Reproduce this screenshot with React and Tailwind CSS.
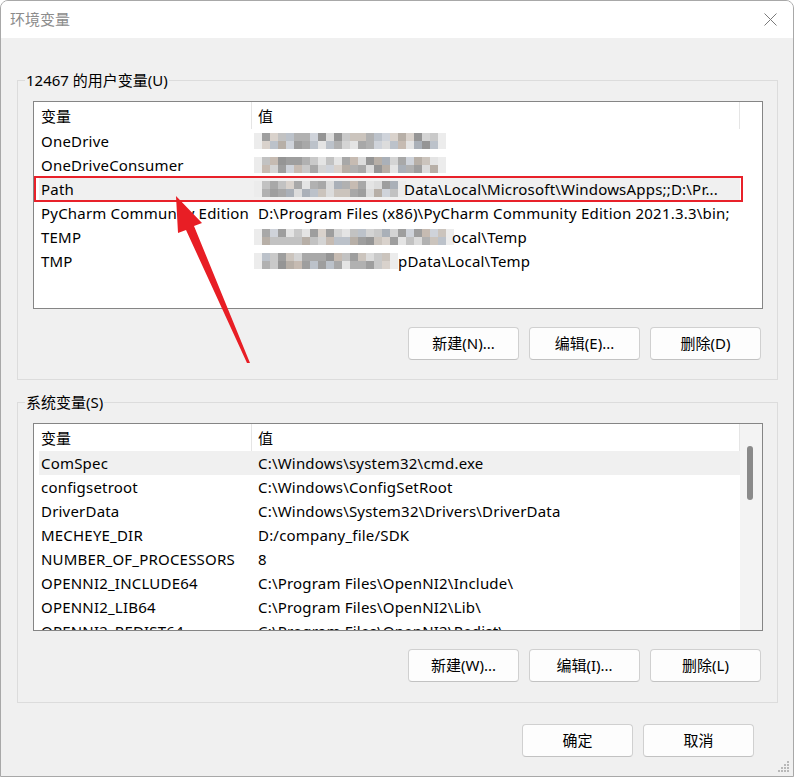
import React from 'react';

const palette = ['#d4d4d4', '#c2c2c2', '#b1b1b1', '#dcdcdc', '#a8a8a8', '#cbc4bd', '#bcc2ca', '#9e9e9e', '#e4e4e4', '#c6bbb2', '#cfd3da', '#959595', '#b7afa7', '#c9c9c9', '#aab0b8', '#d9d2cc'];

// cheap deterministic hash so the blur looks random
const pick = (i, r, seed) => {
    let h = (i + 1) * 374761393 + (r + 1) * 668265263 + seed * 2246822519;
    h = (h ^ (h >>> 13)) * 1274126177;
    h = h ^ (h >>> 16);
    return palette[Math.abs(h) % palette.length];
};

// pixelated blur block that hides part of a value
const Mosaic = ({ width, seed = 1 }) => {
    const cols = Math.ceil(width / 8);
    return (
        <div className="flex flex-col shrink-0" style={{ width }}>
            {[0, 1].map((r) => (
                <div key={r} className="flex">
                    {Array.from({ length: cols }).map((_, i) => (
                        <span
                            key={i}
                            className="w-2 h-2 shrink-0"
                            style={{ backgroundColor: i === 0 || i === cols - 1 ? '#ececec' : pick(i, r, seed) }}
                        />
                    ))}
                </div>
            ))}
        </div>
    );
};

const userVars = [
    { name: 'OneDrive', blur: 188, seed: 1 },
    { name: 'OneDriveConsumer', blur: 190, seed: 2 },
    { name: 'Path', blur: 150, seed: 3, value: 'Data\\Local\\Microsoft\\WindowsApps;;D:\\Pr...', marked: true },
    { name: 'PyCharm Community Edition', value: 'D:\\Program Files (x86)\\PyCharm Community Edition 2021.3.3\\bin;' },
    { name: 'TEMP', blur: 198, seed: 4, value: 'ocal\\Temp' },
    { name: 'TMP', blur: 144, seed: 5, value: 'pData\\Local\\Temp' },
];

const systemVars = [
    { name: 'ComSpec', value: 'C:\\Windows\\system32\\cmd.exe', selected: true },
    { name: 'configsetroot', value: 'C:\\Windows\\ConfigSetRoot' },
    { name: 'DriverData', value: 'C:\\Windows\\System32\\Drivers\\DriverData' },
    { name: 'MECHEYE_DIR', value: 'D:/company_file/SDK' },
    { name: 'NUMBER_OF_PROCESSORS', value: '8' },
    { name: 'OPENNI2_INCLUDE64', value: 'C:\\Program Files\\OpenNI2\\Include\\' },
    { name: 'OPENNI2_LIB64', value: 'C:\\Program Files\\OpenNI2\\Lib\\' },
    { name: 'OPENNI2_REDIST64', value: 'C:\\Program Files\\OpenNI2\\Redist\\' },
];

const Button = ({ children }) => (
    <button className="w-[111px] h-[33px] bg-[#fdfdfd] border border-[#d0d0d0] border-b-[#c2c2c2] rounded-[4px] text-[15px] text-black">
        {children}
    </button>
);

const VarList = ({ rows, scroll }) => (
    <div className="flex h-[208px] bg-white border border-[#858585] overflow-hidden">
        <div className="w-[706px] flex flex-col">
            <div className="flex h-[27px] shrink-0">
                <div className="w-[218px] pl-[7px] pt-[3px] border-r border-[#e5e5e5]">变量</div>
                <div className="flex-1 pl-[6px] pt-[3px] border-r border-[#e5e5e5]">值</div>
            </div>
            {rows.map((row) => (
                <div
                    key={row.name}
                    className={`relative flex items-center h-[24px] shrink-0 ml-[5px] tracking-[0.2px] ${row.selected || row.marked ? 'bg-[#f0f0f0]' : ''}`}
                >
                    <div className="w-[213px] pl-[2px] whitespace-nowrap overflow-hidden">{row.name}</div>
                    <div className="flex-1 flex items-center pl-[6px] whitespace-nowrap overflow-hidden">
                        {row.blur && (
                            <div className="-ml-[4px]">
                                <Mosaic width={row.blur} seed={row.seed} />
                            </div>
                        )}
                        {row.value && <span>{row.value}</span>}
                    </div>
                    {row.marked && (
                        <div className="absolute left-[-5px] right-[-3px] top-[-1px] bottom-[-1px] border-2 border-[#e8212a]" />
                    )}
                </div>
            ))}
        </div>
        <div className={`flex-1 ${scroll ? 'bg-[#f3f3f3]' : ''}`}>
            {scroll && <div className="ml-[7px] mt-[22px] w-[6px] h-[54px] rounded-full bg-[#8a8a8a]" />}
        </div>
    </div>
);

const Group = ({ label, rows, scroll, buttons, className }) => (
    <div className={`relative border border-[#dcdcdc] pt-[20px] pl-[15px] pr-[14px] ${className}`}>
        <span className="absolute left-[7px] top-[-11px] px-[1px] leading-[20px] bg-[#f0f0f0]">{label}</span>
        <VarList rows={rows} scroll={scroll} />
        <div className="flex justify-end gap-[10px] pr-[2px] mt-[18px]">
            {buttons.map((b) => (
                <Button key={b}>{b}</Button>
            ))}
        </div>
    </div>
);

const App = () => {
    return (
        <div className="relative w-[794px] h-[777px] flex flex-col bg-[#f0f0f0] border border-[#a8a8a8] rounded-t-[8px] overflow-hidden text-[15px] text-black font-['Noto_Sans','Noto_Sans_CJK_SC',sans-serif]">
            {/* title bar */}
            <div className="h-[37px] shrink-0 bg-white flex items-center justify-between pl-[9px] pr-[15px]">
                <span className="text-[#8c8c8c]">环境变量</span>
                <svg width="13" height="13" viewBox="0 0 13 13" className="mr-[1px]">
                    <path d="M0.5 0.5 L12.5 12.5 M12.5 0.5 L0.5 12.5" stroke="#7a7a7a" strokeWidth="1" />
                </svg>
            </div>

            <div className="flex flex-col pl-[16px] pr-[15px]">
                <Group
                    className="mt-[42px] h-[300px]"
                    label="12467 的用户变量(U)"
                    rows={userVars}
                    buttons={['新建(N)...', '编辑(E)...', '删除(D)']}
                />
                <Group
                    className="mt-[22px] h-[301px]"
                    label="系统变量(S)"
                    rows={systemVars}
                    scroll
                    buttons={['新建(W)...', '编辑(I)...', '删除(L)']}
                />
            </div>

            <div className="flex justify-end gap-[10px] pr-[39px] mt-[21px]">
                <Button>确定</Button>
                <Button>取消</Button>
            </div>

            {/* resize grip */}
            <svg width="12" height="12" viewBox="0 0 12 12" className="absolute right-[3px] bottom-[3px]">
                {[[9, 0], [6, 3], [9, 3], [3, 6], [6, 6], [9, 6], [0, 9], [3, 9], [6, 9], [9, 9]].map(([x, y]) => (
                    <rect key={`${x}-${y}`} x={x} y={y} width="2" height="2" fill="#b8b8b8" />
                ))}
            </svg>

            {/* annotation arrow */}
            <svg className="absolute inset-0 pointer-events-none" width="794" height="777" viewBox="0 0 794 777">
                <polygon points="175,195 201,222 193,225 249,362 246,362 185,229 177,232" fill="#e81e25" />
            </svg>
        </div>
    );
};

export default App;
